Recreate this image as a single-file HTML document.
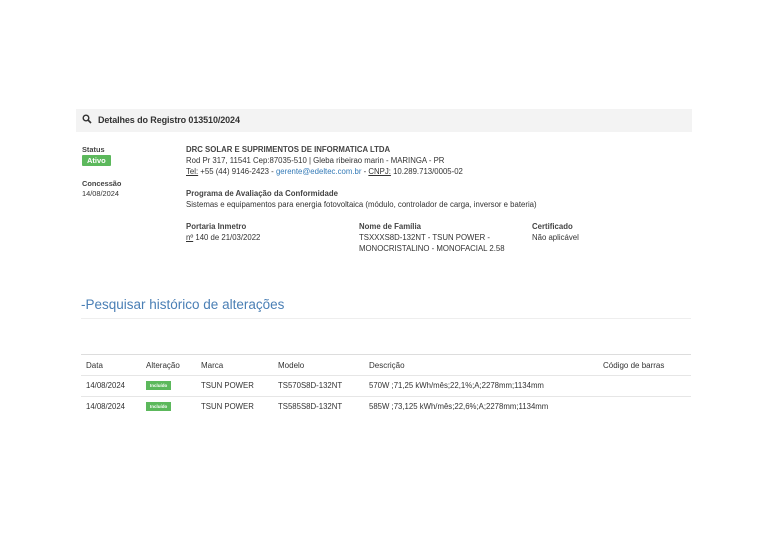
<!DOCTYPE html><html><head><meta charset="utf-8"><style>
body{margin:0;width:768px;height:543px;background:#fff;font-family:"Liberation Sans",sans-serif;color:#333;position:relative;overflow:hidden}
.a{position:absolute;white-space:nowrap;font-size:7.4px;line-height:9px}
.b{font-weight:bold;color:#444}
.g{background:#5cb85c;color:#fff;font-weight:bold}
</style></head><body>
<div style="position:absolute;left:76px;top:109px;width:616px;height:23px;background:#f3f3f3"></div>
<svg style="position:absolute;left:82px;top:114px" width="10" height="10" viewBox="0 0 10 10"><circle cx="4" cy="4" r="2.8" fill="none" stroke="#333" stroke-width="1.4"/><path d="M6 6L9 9" stroke="#333" stroke-width="1.6"/></svg>
<div class="a" style="left:98px;top:115px;font-size:9px;line-height:11px;color:#333;font-weight:bold;letter-spacing:-0.1px">Detalhes do Registro 013510/2024</div>
<div class="a b" style="left:82px;top:145px">Status</div>
<div class="a g" style="left:82px;top:155px;padding:0 5px;border-radius:1px;font-size:7.5px;line-height:11px">Ativo</div>
<div class="a b" style="left:82px;top:179px">Concessão</div>
<div class="a" style="left:82px;top:189px">14/08/2024</div>
<div class="a b" style="left:186px;top:145px;font-size:7.8px">DRC SOLAR E SUPRIMENTOS DE INFORMATICA LTDA</div>
<div class="a" style="left:186px;top:156px;font-size:7.8px">Rod Pr 317, 11541 Cep:87035-510 | Gleba ribeirao marin - MARINGA - PR</div>
<div class="a" style="left:186px;top:167px;font-size:7.8px"><u>Tel:</u> +55 (44) 9146-2423 - <span style="color:#337ab7">gerente@edeltec.com.br</span> - <u>CNPJ:</u> 10.289.713/0005-02</div>
<div class="a b" style="left:186px;top:189px;font-size:7.8px">Programa de Avaliação da Conformidade</div>
<div class="a" style="left:186px;top:200px;font-size:7.8px">Sistemas e equipamentos para energia fotovoltaica (módulo, controlador de carga, inversor e bateria)</div>
<div class="a b" style="left:186px;top:222px;font-size:7.8px">Portaria Inmetro</div>
<div class="a" style="left:186px;top:233px;font-size:7.8px"><u>nº</u> 140 de 21/03/2022</div>
<div class="a b" style="left:359px;top:222px;font-size:7.8px">Nome de Família</div>
<div class="a" style="left:359px;top:233px;font-size:7.8px">TSXXXS8D-132NT - TSUN POWER -</div>
<div class="a" style="left:359px;top:244px;font-size:7.8px">MONOCRISTALINO - MONOFACIAL 2.58</div>
<div class="a b" style="left:532px;top:222px;font-size:7.8px">Certificado</div>
<div class="a" style="left:532px;top:233px;font-size:7.8px">Não aplicável</div>
<div class="a" style="left:81px;top:297px;font-size:13.5px;line-height:16px;color:#4a7fb5">-Pesquisar histórico de alterações</div>
<div style="position:absolute;left:81px;top:318px;width:610px;height:1px;background:#eee"></div>
<div style="position:absolute;left:81px;top:354px;width:610px;height:1px;background:#ddd"></div>
<div style="position:absolute;left:81px;top:375px;width:610px;height:1px;background:#e6e6e6"></div>
<div style="position:absolute;left:81px;top:396px;width:610px;height:1px;background:#e6e6e6"></div>
<div class="a" style="left:86px;top:361px;font-size:8px">Data</div>
<div class="a" style="left:146px;top:361px;font-size:8px">Alteração</div>
<div class="a" style="left:201px;top:361px;font-size:8px">Marca</div>
<div class="a" style="left:278px;top:361px;font-size:8px">Modelo</div>
<div class="a" style="left:369px;top:361px;font-size:8px">Descrição</div>
<div class="a" style="left:603px;top:361px;font-size:8px">Código de barras</div>
<div class="a" style="left:86px;top:381px;font-size:7.8px">14/08/2024</div>
<div class="a g" style="left:146px;top:381px;font-size:4.5px;padding:0 4px">Incluído</div>
<div class="a" style="left:201px;top:381px;font-size:7.8px">TSUN POWER</div>
<div class="a" style="left:278px;top:381px;font-size:7.8px">TS570S8D-132NT</div>
<div class="a" style="left:369px;top:381px;font-size:7.8px">570W ;71,25 kWh/mês;22,1%;A;2278mm;1134mm</div>
<div class="a" style="left:86px;top:402px;font-size:7.8px">14/08/2024</div>
<div class="a g" style="left:146px;top:402px;font-size:4.5px;padding:0 4px">Incluído</div>
<div class="a" style="left:201px;top:402px;font-size:7.8px">TSUN POWER</div>
<div class="a" style="left:278px;top:402px;font-size:7.8px">TS585S8D-132NT</div>
<div class="a" style="left:369px;top:402px;font-size:7.8px">585W ;73,125 kWh/mês;22,6%;A;2278mm;1134mm</div>
</body></html>
